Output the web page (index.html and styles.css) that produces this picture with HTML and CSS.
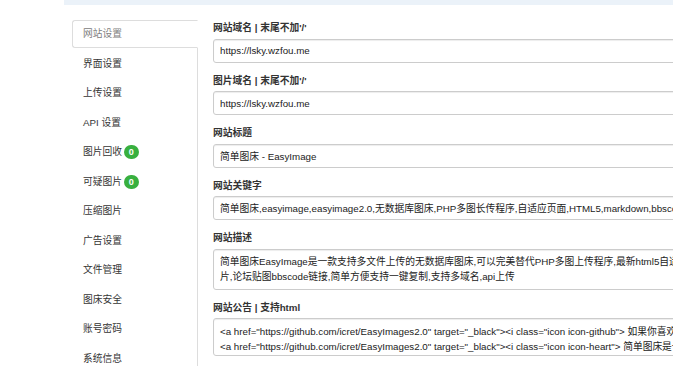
FILE: index.html
```html
<!DOCTYPE html>
<html lang="zh-CN">
<head>
    <meta charset="UTF-8">
    <meta name="viewport" content="width=device-width, initial-scale=1.0">
    <title>网站设置</title>
    <link rel="stylesheet" href="styles.css">
</head>
<body>
    <div class="page">
        <div class="topbar"></div>
        <div class="layout">
            <ul class="side-nav">
                <li class="active"><a href="#">网站设置</a></li>
                <li><a href="#">界面设置</a></li>
                <li><a href="#">上传设置</a></li>
                <li><a href="#">API 设置</a></li>
                <li><a href="#">图片回收 <span class="badge">0</span></a></li>
                <li><a href="#">可疑图片 <span class="badge">0</span></a></li>
                <li><a href="#">压缩图片</a></li>
                <li><a href="#">广告设置</a></li>
                <li><a href="#">文件管理</a></li>
                <li><a href="#">图床安全</a></li>
                <li><a href="#">账号密码</a></li>
                <li><a href="#">系统信息</a></li>
            </ul>
            <form class="settings">
                <div class="form-group">
                    <label>网站域名 | 末尾不加'/'</label>
                    <input class="form-control" type="text" value="https://lsky.wzfou.me">
                </div>
                <div class="form-group">
                    <label>图片域名 | 末尾不加'/'</label>
                    <input class="form-control" type="text" value="https://lsky.wzfou.me">
                </div>
                <div class="form-group">
                    <label>网站标题</label>
                    <input class="form-control" type="text" value="简单图床 - EasyImage">
                </div>
                <div class="form-group">
                    <label>网站关键字</label>
                    <input class="form-control" type="text" value="简单图床,easyimage,easyimage2.0,无数据库图床,PHP多图长传程序,自适应页面,HTML5,markdown,bbscode,一键复制">
                </div>
                <div class="form-group">
                    <label>网站描述</label>
                    <textarea class="form-control desc" wrap="off">简单图床EasyImage是一款支持多文件上传的无数据库图床,可以完美替代PHP多图上传程序,最新html5自适应页面兼容手机电脑,上传后返回图
片,论坛贴图bbscode链接,简单方便支持一键复制,支持多域名,api上传</textarea>
                </div>
                <div class="form-group">
                    <label>网站公告 | 支持html</label>
                    <textarea class="form-control notice" wrap="off">&lt;a href="https://github.com/icret/EasyImages2.0" target="_black"&gt;&lt;i class="icon icon-github"&gt; 如果你喜欢这个项目,欢迎点个Star&lt;/i&gt;&lt;/a&gt;
&lt;a href="https://github.com/icret/EasyImages2.0" target="_black"&gt;&lt;i class="icon icon-heart"&gt; 简单图床是一款开源免费的图床程序&lt;/i&gt;&lt;/a&gt;
&lt;a href="https://github.com/icret/EasyImages2.0/issues" target="_black"&gt;&lt;i class="icon icon-info"&gt; 使用说明请看文档&lt;/i&gt;&lt;/a&gt;</textarea>
                </div>
            </form>
        </div>
    </div>
</body>
</html>
```

FILE: styles.css
```css
    html, body {
        margin: 0;
        overflow: hidden;
        background-color: #fff;
    }
    body {
        font-family: "Liberation Sans", Arial, "Noto Sans CJK SC", sans-serif;
        font-size: 9.75px;
        line-height: 15px;
        color: #333;
    }
    .page {
        margin-left: 64px;
    }
    .topbar {
        height: 5px;
        background-color: #ebf2f9;
    }
    .layout {
        display: flex;
        align-items: flex-start;
        padding: 15px 0 0 8px;
    }
    .side-nav {
        list-style: none;
        margin: 0;
        padding: 0;
        width: 126px;
        flex-shrink: 0;
        border-right: 1px solid #ddd;
        box-sizing: border-box;
    }
    .side-nav li {
        margin-bottom: 2px;
    }
    .side-nav a {
        display: block;
        padding: 5.25px 10px;
        line-height: 15px;
        color: #353535;
        text-decoration: none;
        border: 1px solid transparent;
        border-radius: 3px 0 0 3px;
        margin-right: -1px;
    }
    .side-nav .active a {
        color: #808080;
        background-color: #fff;
        border-color: #ddd;
        border-right-color: transparent;
    }
    .badge {
        display: inline-block;
        width: 15px;
        height: 14px;
        line-height: 14px;
        margin-left: -1px;
        border-radius: 8px;
        background-color: #38b03f;
        color: #fff;
        font-size: 9px;
        font-weight: bold;
        text-align: center;
        vertical-align: 0;
    }
    .settings {
        flex: 0 0 900px;
        margin: 0 0 0 15px;
    }
    .form-group {
        margin-bottom: 9.75px;
    }
    .form-group label {
        display: block;
        font-weight: bold;
        margin-bottom: 3.75px;
        color: #333;
    }
    .form-control {
        display: block;
        width: 100%;
        box-sizing: border-box;
        height: 24px;
        padding: 4.5px 6px;
        font-family: inherit;
        font-size: 9.75px;
        line-height: 15px;
        color: #222;
        background-color: #fff;
        border: 1px solid #ccc;
        border-radius: 3px;
        box-shadow: inset 0 1px 1px rgba(0,0,0,.075);
        margin: 0;
    }
    textarea.form-control {
        resize: none;
        overflow: hidden;
        white-space: pre;
    }
    .desc {
        height: 41px;
    }
    .notice {
        height: 38px;
    }
```
